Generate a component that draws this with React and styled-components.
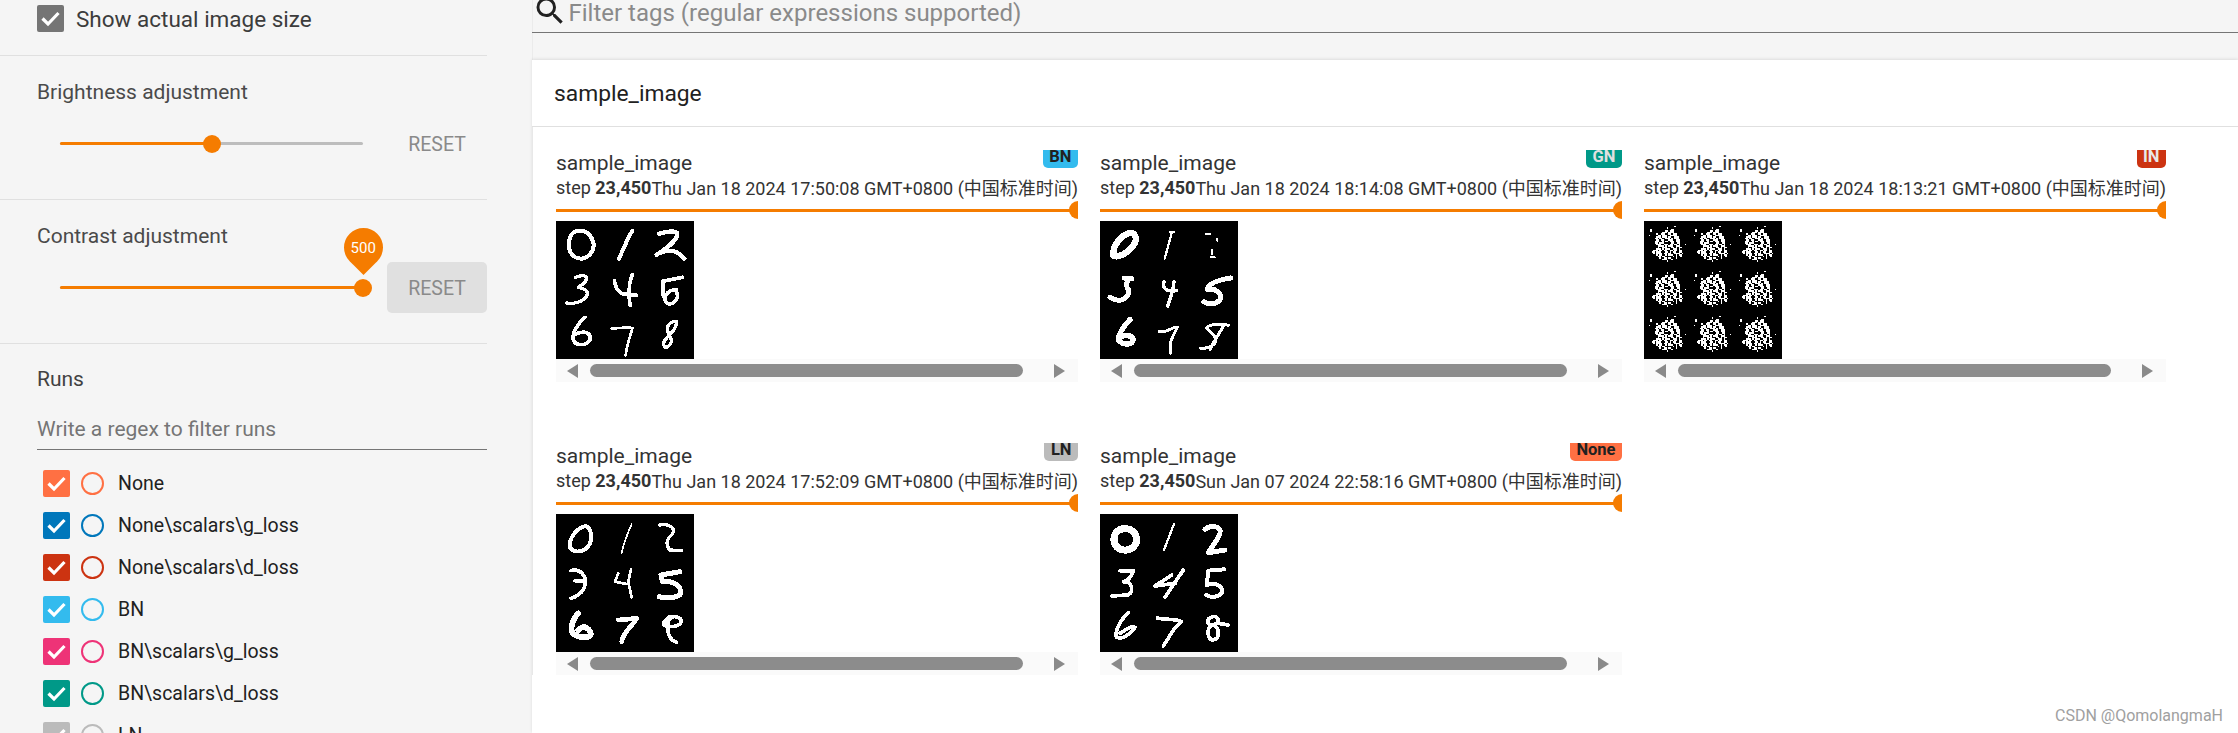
import styled, { createGlobalStyle } from "styled-components";

const ORANGE = "#f57c00";

const GlobalStyle = createGlobalStyle`
  html, body {
    margin: 0;
    padding: 0;
    height: 733px;
    overflow: hidden;
    background: #f5f5f5;
    font-family: Roboto, "Noto Sans CJK SC", sans-serif;
    color: #212121;
  }
`;

const Page = styled.div`
  display: flex;
  height: 733px;
  overflow: hidden;
  position: relative;
`;

const Sidebar = styled.aside`
  width: 487px;
  flex: none;
  padding-right: 45px;
  border-right: 1px solid #ebebeb;
  overflow: hidden;
`;

const Section = styled.section`
  padding: 25px 0 30px 37px;
  border-bottom: 1px solid #e0e0e0;
`;

const ActualSize = styled(Section)`
  display: flex;
  align-items: center;
  gap: 12px;
  height: 56px;
  box-sizing: border-box;
  padding: 0 0 18px 37px;
  font-size: 22.5px;
  color: #3c3c3c;
`;

const Check = styled.span`
  width: 27px;
  height: 27px;
  flex: none;
  display: block;
  border-radius: 2px;
  background: ${(p) => p.$color};

  svg {
    display: block;
  }
`;

const SectionLabel = styled.div`
  font-size: 21px;
  line-height: 23px;
  color: #4a4a4a;
`;

const SliderRow = styled.div`
  display: flex;
  align-items: center;
  height: 51px;
  margin-top: 14px;
  padding-left: 23px;
`;

const Track = styled.div`
  position: relative;
  width: 303px;
  height: 3px;
  flex: none;
  background: #bdbdbd;
  border-radius: 2px;
`;

const TrackFill = styled.div`
  height: 100%;
  width: ${(p) => p.$value * 100}%;
  background: ${ORANGE};
  border-radius: 2px;
`;

const Thumb = styled.div`
  position: absolute;
  top: -7.5px;
  left: calc(${(p) => p.$value * 100}% - 9px);
  width: 18px;
  height: 18px;
  border-radius: 50%;
  background: ${ORANGE};
`;

const Bubble = styled.div`
  position: absolute;
  left: -10.5px;
  top: -51px;
  width: 39px;
  height: 39px;
  background: ${ORANGE};
  border-radius: 50% 50% 0 50%;
  transform: rotate(45deg);
  display: flex;
  align-items: center;
  justify-content: center;

  span {
    transform: rotate(-45deg);
    color: #fff;
    font-size: 15px;
  }
`;

const ResetButton = styled.div`
  width: 100px;
  height: 51px;
  box-sizing: border-box;
  padding-top: 2px;
  margin-left: 24px;
  flex: none;
  display: flex;
  align-items: center;
  justify-content: center;
  font-size: 19.5px;
  color: #8a8a8a;
  border-radius: 5px;
  background: ${(p) => (p.$active ? "#e0e0e0" : "transparent")};
`;

const RunsSection = styled.section`
  padding: 23px 0 0 37px;
`;

const RunsTitle = styled.div`
  font-size: 21px;
  line-height: 24px;
  color: #424242;
`;

const RegexInput = styled.div`
  margin-top: 26px;
  height: 31.5px;
  border-bottom: 1.5px solid #757575;
  font-size: 21px;
  line-height: 24px;
  color: #757575;
`;

const RunList = styled.div`
  margin-top: 13px;
  padding-left: 6px;
`;

const RunRow = styled.div`
  display: flex;
  align-items: center;
  height: 42px;
  font-size: 19.5px;
  color: #212121;
`;

const Radio = styled.span`
  width: 23px;
  height: 23px;
  box-sizing: border-box;
  flex: none;
  margin: 0 14px 0 11px;
  border: 2px solid ${(p) => p.$color};
  border-radius: 50%;
`;

const Main = styled.main`
  flex: 1;
  min-width: 0;
  margin-left: -1px;
  display: flex;
  flex-direction: column;
`;

const FilterBar = styled.div`
  height: 32px;
  display: flex;
  align-items: flex-start;
  border-bottom: 1.5px solid #757575;
  overflow: hidden;
  font-size: 24px;
  line-height: 26px;
  color: #8a8a8a;

  svg {
    flex: none;
    margin: -7px 0 0 0;
  }
`;

const FilterText = styled.span`
  margin-left: 0.5px;
`;

const Card = styled.div`
  margin-top: 27px;
  flex: 1;
  background: #fff;
  box-shadow: 0 -1px 3px rgba(0, 0, 0, 0.1);
`;

const CardHeader = styled.div`
  height: 66px;
  display: flex;
  align-items: center;
  padding-left: 22px;
  border-bottom: 1px solid #e0e0e0;
  font-size: 22.8px;
  color: #212121;
`;

const CardGrid = styled.div`
  display: grid;
  grid-template-columns: repeat(3, 522px);
  column-gap: 22px;
  row-gap: 61px;
  padding: 23px 0 0 23px;
  border-left: 1px solid #e8e8e8;
`;

const Item = styled.div`
  width: 522px;
`;

const ItemHead = styled.div`
  height: 27px;
  display: flex;
  justify-content: space-between;
  overflow: hidden;
`;

const ItemTitle = styled.div`
  font-size: 21px;
  line-height: 27px;
  color: #333;
`;

const Chip = styled.div`
  height: 18px;
  padding: 0 6.5px;
  font-size: 16.5px;
  font-weight: 700;
  line-height: 22px;
  border-radius: 0 0 5px 5px;
  overflow: hidden;
  background: ${(p) => p.$color};
  color: ${(p) => p.$text};
  > span {
    display: block;
    margin-top: -4px;
  }
`;

const StepLine = styled.div`
  display: flex;
  align-items: center;
  justify-content: space-between;
  height: 22px;
  margin-top: -1px;
  font-size: 18px;
  white-space: nowrap;
  color: #333;

  b {
    font-weight: 700;
  }
`;

const ItemSlider = styled.div`
  position: relative;
  height: 18px;
  margin-top: 3px;
  overflow: hidden;

  &::before {
    content: "";
    position: absolute;
    left: 0;
    right: 0;
    top: 7.5px;
    height: 3px;
    background: ${ORANGE};
  }

  &::after {
    content: "";
    position: absolute;
    right: -9px;
    top: 0;
    width: 18px;
    height: 18px;
    border-radius: 50%;
    background: ${ORANGE};
  }
`;

const Sample = styled.svg`
  display: block;
  width: 138px;
  height: 138px;
  margin-top: 2px;
  background: #000;
`;

const ScrollTrack = styled.div`
  height: 23px;
  display: flex;
  align-items: center;
  background: #fafafa;
`;

const ScrollLeft = styled.span`
  width: 0;
  height: 0;
  margin-left: 11px;
  border-style: solid;
  border-width: 7px 11px 7px 0;
  border-color: transparent #8a8a8a transparent transparent;
`;

const ScrollThumb = styled.span`
  width: 433px;
  height: 13px;
  margin-left: 12px;
  border-radius: 7px;
  background: #8c8c8c;
`;

const ScrollRight = styled.span`
  width: 0;
  height: 0;
  margin-left: 31px;
  border-style: solid;
  border-width: 7px 0 7px 11px;
  border-color: transparent transparent transparent #8a8a8a;
`;

const Watermark = styled.div`
  position: absolute;
  right: 15px;
  bottom: 8px;
  font-size: 16px;
  color: #a0a0a0;
`;

const CheckMark = () => (
  <svg width="27" height="27" viewBox="0 0 27 27">
    <polyline points="5.5,13.5 11,19 21.5,8" fill="none" stroke="#fff" strokeWidth="3.2" />
  </svg>
);

const SearchIcon = () => (
  <svg width="36" height="36" viewBox="0 0 24 24" fill="#212121">
    <path d="M15.5 14h-.79l-.28-.27A6.471 6.471 0 0 0 16 9.5 6.5 6.5 0 1 0 9.5 16c1.61 0 3.09-.59 4.23-1.57l.27.28v.79l5 4.99L20.49 19l-4.99-5zm-6 0C7.01 14 5 11.99 5 9.5S7.01 5 9.5 5 14 7.01 14 9.5 11.99 14 9.5 14z" />
  </svg>
);

// 28x28 generator output for the instance-norm run, repeated in every tile
const NOISE = [
  "............................",
  "..................#.........",
  ".............#..............",
  "..#.............##..........",
  "..#.........##.###..........",
  "..........###.####..........",
  "......#..###..##.###........",
  ".#.....##.###..#####........",
  "......###.###.##..###.......",
  ".....##.##..###.#.###.......",
  "......##.##...###..###......",
  ".....###..#.##.###.###......",
  ".....##.###.....##..##......",
  "......###..###.##.##.#...#..",
  ".......####.#.###..###......",
  ".......#..###...##.#.##.....",
  "......###.#.###..###.#......",
  "....###.##.##..##.##.##.....",
  "...##.###...##.#.##..##.....",
  "....#.####.##.##..####.#....",
  "......#.##..#.###..#.##.....",
  ".......##.##.....#.#..#.....",
  "........#..##.##...#........",
  "..........###...#...........",
  ".............#..............",
  "............................",
  "............................",
  "............................",
];

const NOISE_PATH = NOISE.flatMap((row, y) =>
  [...row].map((c, x) => (c === "#" ? `M${x} ${y}h1v1h-1z` : "")),
).join("");

const NoiseImage = () => (
  <Sample viewBox="0 0 92 92" shapeRendering="crispEdges">
    {[2, 32, 62].flatMap((ty) =>
      [2, 32, 62].map((tx) => (
        <path key={`${tx}-${ty}`} d={NOISE_PATH} fill="#fff" transform={`translate(${tx} ${ty})`} />
      )),
    )}
  </Sample>
);

// strokes are in the coordinates of a 3x crop: [stroke width, path]
const BN_DIGITS = [
  [12, "M70 38C50 40 40 60 42 85C44 110 60 122 80 122C100 120 118 100 116 78C112 55 95 35 70 38Z"],
  [12, "M232 38C225 50 210 80 192 122"],
  [13, "M313 47C335 40 360 38 366 45C370 60 345 85 305 110M320 103C345 92 370 100 388 122"],
  [10, "M62 178C80 170 95 172 95 182C90 200 70 205 70 208C90 212 103 220 95 235C85 250 55 260 35 255"],
  [11, "M178 188C180 205 190 225 205 228L245 232M232 170C222 190 220 230 225 262"],
  [11, "M382 178L322 190C325 205 325 220 325 235M365 215C335 215 322 240 335 255C350 265 375 245 365 222"],
  [11, "M90 298C70 315 50 345 55 365C60 385 95 385 105 365C110 345 85 335 60 350"],
  [8, "M170 332C190 330 220 328 232 330C225 360 215 380 212 412"],
  [10, "M365 310C345 310 330 325 340 345C350 365 355 370 340 385C325 395 320 375 335 360C350 345 365 330 365 310Z"],
];

const GN_DIGITS = [
  [19, "M90 45C60 52 38 85 40 112C52 125 105 95 108 62C106 47 95 42 90 45Z"],
  [7, "M216 42L194 122M210 42h12"],
  [6, "M318 48h12M352 62v6M332 118h12M336 96v12"],
  [15, "M72 180L95 182M85 182C78 200 78 205 85 215C90 240 60 258 30 238"],
  [10, "M192 192C188 210 195 222 230 218M222 190C222 215 210 240 203 265"],
  [15, "M392 180C360 185 325 195 322 215C350 210 365 225 360 245C345 262 325 260 312 252"],
  [16, "M90 305C70 325 55 350 55 365C65 380 95 385 100 365C95 350 75 350 60 358"],
  [9, "M178 340C195 350 215 325 232 328C222 350 205 370 212 405"],
  [9, "M385 322C360 315 325 320 320 330C330 345 355 355 345 375C330 395 300 390 300 390M372 320C360 345 340 370 330 395"],
];

const LN_DIGITS = [
  [12, "M85 50C60 60 40 90 45 112C60 135 100 125 108 90C110 60 100 45 85 50Z"],
  [5, "M230 42C220 65 205 100 200 130"],
  [10, "M315 45C345 40 365 55 350 75C330 90 335 110 345 120L380 122"],
  [11, "M48 182C75 175 95 195 90 225C85 250 60 262 48 265M60 212L85 212"],
  [8, "M190 190L180 215L215 222M228 178L220 215L230 262"],
  [15, "M375 185L318 195L322 215C365 210 385 240 375 255C355 265 330 265 312 260"],
  [17, "M70 310C50 330 45 360 55 372C75 385 105 385 108 372C100 350 85 345 70 360"],
  [14, "M190 330L245 325C235 345 205 365 200 395"],
  [11, "M345 320C320 335 320 350 345 350C375 350 385 335 375 325C360 315 345 320 340 335C335 360 340 390 365 397"],
];

const NONE_DIGITS = [
  [21, "M75 56C50 56 40 75 42 92C45 115 65 122 80 120C100 118 112 100 110 85C106 65 92 56 75 56Z"],
  [7, "M222 42L192 120"],
  [15, "M315 58C335 42 365 50 360 70C350 95 335 110 325 128L375 120"],
  [11, "M60 182L100 182C95 200 85 212 70 215C100 215 100 245 85 255L35 258"],
  [11, "M215 195L165 228L225 220M250 180L195 262"],
  [12, "M372 178L325 182L320 225C350 215 372 230 365 250C350 265 330 262 318 255"],
  [11, "M85 308C60 330 42 370 50 382C75 392 105 355 105 352C90 345 70 365 60 370"],
  [11, "M172 324C195 330 225 325 245 335C220 350 210 380 190 408"],
  [11, "M335 322C320 325 318 345 335 345C352 345 360 330 350 322C345 318 338 320 335 322ZM335 345C320 355 320 390 340 390C360 385 360 355 340 345ZM355 340L385 345"],
];

const DigitImage = ({ digits, box }) => (
  <Sample viewBox={box} shapeRendering="crispEdges">
    {digits.map(([width, d], i) => (
      <path key={i} d={d} fill="none" stroke="#fff" strokeWidth={width} strokeLinecap="round" strokeLinejoin="round" />
    ))}
  </Sample>
);

const RUNS = [
  ["None", "#ff7043"],
  ["None\\scalars\\g_loss", "#0077bb"],
  ["None\\scalars\\d_loss", "#cc3311"],
  ["BN", "#33bbee"],
  ["BN\\scalars\\g_loss", "#ee3377"],
  ["BN\\scalars\\d_loss", "#009988"],
  ["LN", "#bbbbbb"],
];

const SAMPLES = [
  { run: "BN", color: "#33bbee", text: "#212121", date: "Thu Jan 18 2024 17:50:08 GMT+0800 (中国标准时间)", image: <DigitImage digits={BN_DIGITS} box="3 9 414 414" /> },
  { run: "GN", color: "#009988", text: "#e0e0e0", date: "Thu Jan 18 2024 18:14:08 GMT+0800 (中国标准时间)", image: <DigitImage digits={GN_DIGITS} box="0 9 414 414" /> },
  { run: "IN", color: "#cc3311", text: "#e8e8e8", date: "Thu Jan 18 2024 18:13:21 GMT+0800 (中国标准时间)", image: <NoiseImage /> },
  { run: "LN", color: "#bbbbbb", text: "#212121", date: "Thu Jan 18 2024 17:52:09 GMT+0800 (中国标准时间)", image: <DigitImage digits={LN_DIGITS} box="3 12 414 414" /> },
  { run: "None", color: "#ff7043", text: "#212121", date: "Sun Jan 07 2024 22:58:16 GMT+0800 (中国标准时间)", image: <DigitImage digits={NONE_DIGITS} box="0 12 414 414" /> },
];

const App = () => {
  return (
    <Page>
      <GlobalStyle />
      <Sidebar>
        <ActualSize>
          <Check $color="#757575">
            <CheckMark />
          </Check>
          Show actual image size
        </ActualSize>
        <Section>
          <SectionLabel>Brightness adjustment</SectionLabel>
          <SliderRow>
            <Track>
              <TrackFill $value={0.5} />
              <Thumb $value={0.5} />
            </Track>
            <ResetButton>RESET</ResetButton>
          </SliderRow>
        </Section>
        <Section>
          <SectionLabel>Contrast adjustment</SectionLabel>
          <SliderRow>
            <Track>
              <TrackFill $value={1} />
              <Thumb $value={1}>
                <Bubble>
                  <span>500</span>
                </Bubble>
              </Thumb>
            </Track>
            <ResetButton $active>RESET</ResetButton>
          </SliderRow>
        </Section>
        <RunsSection>
          <RunsTitle>Runs</RunsTitle>
          <RegexInput>Write a regex to filter runs</RegexInput>
          <RunList>
            {RUNS.map(([name, color]) => (
              <RunRow key={name}>
                <Check $color={color}>
                  <CheckMark />
                </Check>
                <Radio $color={color} />
                {name}
              </RunRow>
            ))}
          </RunList>
        </RunsSection>
      </Sidebar>
      <Main>
        <FilterBar>
          <SearchIcon />
          <FilterText>Filter tags (regular expressions supported)</FilterText>
        </FilterBar>
        <Card>
          <CardHeader>sample_image</CardHeader>
          <CardGrid>
            {SAMPLES.map((s) => (
              <Item key={s.run}>
                <ItemHead>
                  <ItemTitle>sample_image</ItemTitle>
                  <Chip $color={s.color} $text={s.text}>
                    <span>{s.run}</span>
                  </Chip>
                </ItemHead>
                <StepLine>
                  <span>
                    step <b>23,450</b>
                  </span>
                  <span>{s.date}</span>
                </StepLine>
                <ItemSlider />
                {s.image}
                <ScrollTrack>
                  <ScrollLeft />
                  <ScrollThumb />
                  <ScrollRight />
                </ScrollTrack>
              </Item>
            ))}
          </CardGrid>
        </Card>
      </Main>
      <Watermark>CSDN @QomolangmaH</Watermark>
    </Page>
  );
};

export default App;
